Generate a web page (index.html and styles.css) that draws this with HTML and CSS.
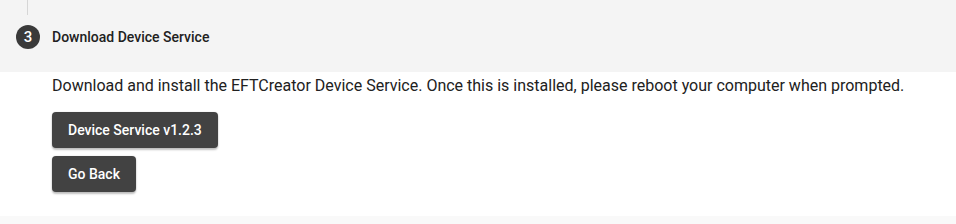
FILE: index.html
```html
<!DOCTYPE html>
<html lang="en">
<head>
  <meta charset="UTF-8">
  <title>Download Device Service</title>
  <link rel="stylesheet" href="styles.css">
</head>
<body>
  <div class="step">
    <div class="step-head">
      <div class="step-line"></div>
      <div class="step-row">
        <span class="step-num">3</span>
        <span class="step-title">Download Device Service</span>
      </div>
    </div>
    <div class="step-body">
      <p>Download and install the EFTCreator Device Service. Once this is installed, please reboot your computer when prompted.</p>
      <button class="btn">Device Service v1.2.3</button>
      <button class="btn">Go Back</button>
    </div>
  </div>
  <div class="foot"></div>
</body>
</html>
```

FILE: styles.css
```css
body {
  margin: 0;
  font-family: Roboto, "Liberation Sans", sans-serif;
  color: #212121;
  background: #fff;
}

.step-head {
  background: #f4f4f4;
  height: 72px;
  padding-left: 16px;
}

.step-line {
  width: 1px;
  height: 15px;
  margin-left: 11px;
  background: #d6d6d6;
}

.step-row {
  display: flex;
  align-items: center;
  gap: 12px;
  height: 43px;
}

.step-num {
  display: flex;
  align-items: center;
  justify-content: center;
  width: 24px;
  height: 24px;
  border-radius: 50%;
  background: #3a3a3a;
  color: #fff;
  font-size: 15px;
  font-weight: 500;
}

.step-title {
  font-size: 14px;
  font-weight: 500;
  color: #212121;
}

.step-body {
  padding: 4px 0 24px 52px;
  height: 116px;
}

.step-body p {
  margin: 0 0 16px;
  font-size: 16px;
  line-height: 20px;
}

.btn {
  display: block;
  height: 36px;
  padding: 0 16px;
  margin-bottom: 8px;
  border: none;
  border-radius: 4px;
  background: #424242;
  color: #fff;
  font-family: inherit;
  font-size: 14px;
  font-weight: 500;
  box-shadow: 0 2px 2px rgba(0,0,0,0.24), 0 0 2px rgba(0,0,0,0.12);
  cursor: pointer;
}

.foot {
  background: #f9f9f9;
  height: 8px;
}
```
